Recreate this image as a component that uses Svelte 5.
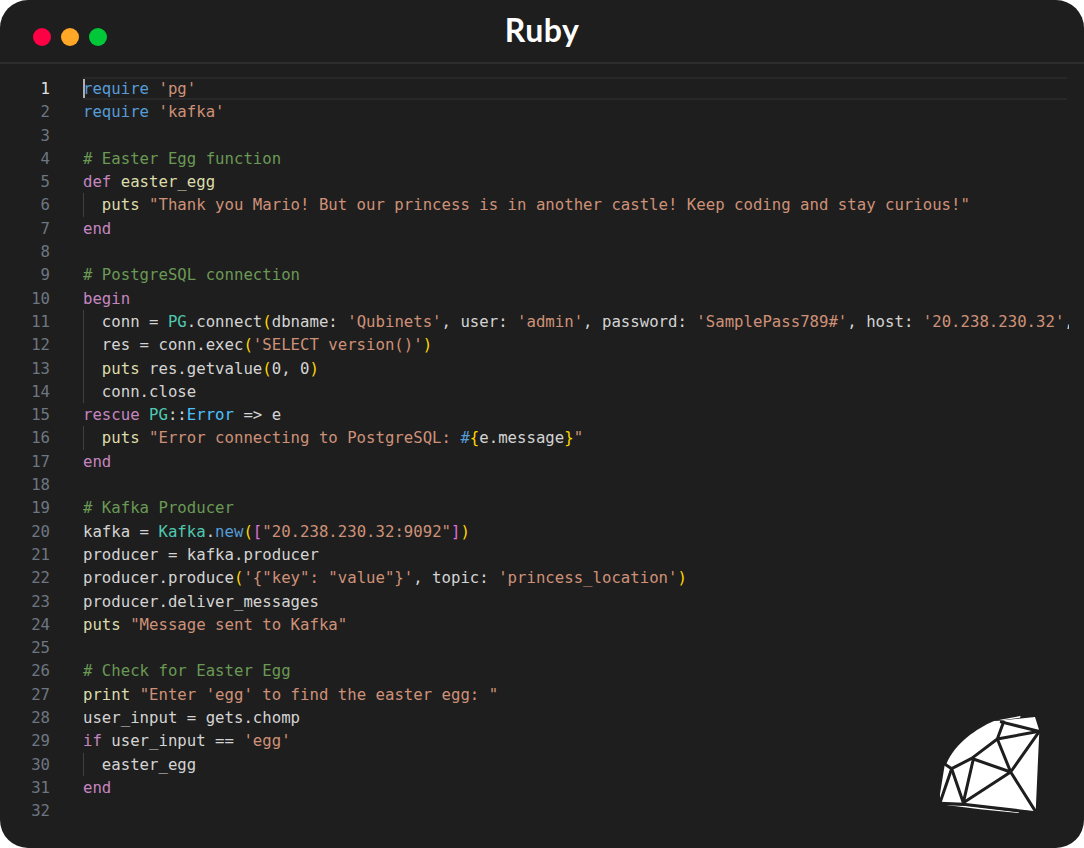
<script>
  const k = 'kw', c = 'cm', s = 'str', f = 'fn', t = 'ty', b = 'bl', e = 'err', g = 'gold', p = 'pur', x = '';
  const lines = [
    { code: [[b, 'require'], [x, ' '], [s, "'pg'"]] },
    { code: [[b, 'require'], [x, ' '], [s, "'kafka'"]] },
    { code: [] },
    { code: [[c, '# Easter Egg function']] },
    { code: [[k, 'def'], [x, ' '], [f, 'easter_egg']] },
    { indent: true, code: [[f, 'puts'], [x, ' '], [s, '"Thank you Mario! But our princess is in another castle! Keep coding and stay curious!"']] },
    { code: [[k, 'end']] },
    { code: [] },
    { code: [[c, '# PostgreSQL connection']] },
    { code: [[k, 'begin']] },
    { indent: true, code: [[x, 'conn = '], [t, 'PG'], [x, '.connect'], [g, '('], [x, 'dbname: '], [s, "'Qubinets'"], [x, ', user: '], [s, "'admin'"], [x, ', password: '], [s, "'SamplePass789#'"], [x, ', host: '], [s, "'20.238.230.32'"], [x, ',']] },
    { indent: true, code: [[x, 'res = conn.exec'], [g, '('], [s, "'SELECT version()'"], [g, ')']] },
    { indent: true, code: [[f, 'puts'], [x, ' res.getvalue'], [g, '('], [x, '0, 0'], [g, ')']] },
    { indent: true, code: [[x, 'conn.close']] },
    { code: [[k, 'rescue'], [x, ' '], [t, 'PG'], [x, '::'], [e, 'Error'], [x, ' => e']] },
    { indent: true, code: [[f, 'puts'], [x, ' '], [s, '"Error connecting to PostgreSQL: '], [b, '#'], [g, '{'], [x, 'e.message'], [g, '}'], [s, '"']] },
    { code: [[k, 'end']] },
    { code: [] },
    { code: [[c, '# Kafka Producer']] },
    { code: [[x, 'kafka = '], [t, 'Kafka'], [x, '.'], [b, 'new'], [g, '('], [p, '['], [s, '"20.238.230.32:9092"'], [p, ']'], [g, ')']] },
    { code: [[x, 'producer = kafka.producer']] },
    { code: [[x, 'producer.produce'], [g, '('], [s, `'{"key": "value"}'`], [x, ', topic: '], [s, "'princess_location'"], [g, ')']] },
    { code: [[x, 'producer.deliver_messages']] },
    { code: [[f, 'puts'], [x, ' '], [s, '"Message sent to Kafka"']] },
    { code: [] },
    { code: [[c, '# Check for Easter Egg']] },
    { code: [[f, 'print'], [x, ' '], [s, `"Enter 'egg' to find the easter egg: "`]] },
    { code: [[x, 'user_input = gets.chomp']] },
    { code: [[k, 'if'], [x, ' user_input == '], [s, "'egg'"]] },
    { indent: true, code: [[x, 'easter_egg']] },
    { code: [[k, 'end']] },
    { code: [] }
  ];
</script>

<div class="window">
  <header class="titlebar">
    <div class="dots">
      <span class="dot red"></span>
      <span class="dot amber"></span>
      <span class="dot green"></span>
    </div>
    <h1>Ruby</h1>
  </header>

  <div class="editor">
    {#each lines as line, i}
      <div class="row" class:active={i === 0}>
        <span class="num">{i + 1}</span>
        <span class="code">
          {#if line.indent}<span class="guide"></span>{/if}{#each line.code as tok}<span class={tok[0]}>{tok[1]}</span>{/each}
        </span>
      </div>
    {/each}
  </div>

  <svg class="gem" viewBox="0 0 552 474" aria-hidden="true">
    <path class="body" d="M282 93C230 115 165 160 139 222L134 226L120 312V338L190 342L407 365L418 122L405 81L297 92Z" />
    <path class="sliver" d="M297 90L362 78L360 83L312 90ZM133 344L215 349L356 366L357 369L240 358Z" />
    <g class="cuts">
      <path d="M300 95L418 124L332 246L407 365" />
      <path d="M312 92L292 147L418 124" />
      <path d="M292 147L332 246L220 207L190 338L332 246" />
      <path d="M292 147L215 205L155 236L190 338" />
      <path d="M134 222L155 236L120 338" />
      <path d="M120 340L190 343L407 368" />
    </g>
  </svg>
</div>

<style>
  :global(body) {
    margin: 0;
    background: #fff;
  }
  .window {
    position: relative;
    width: 1084px;
    height: 848px;
    box-sizing: border-box;
    background: #1e1e1e;
    border-radius: 28px;
    overflow: hidden;
  }
  .titlebar {
    height: 64px;
    box-sizing: border-box;
    border-bottom: 2px solid #2d2d2d;
    display: grid;
    grid-template-columns: 1fr auto 1fr;
    align-items: start;
  }
  .dots {
    display: flex;
    gap: 10px;
    padding: 28px 0 0 33px;
  }
  .dot {
    width: 18px;
    height: 18px;
    border-radius: 50%;
  }
  .red { background: #ff0045; }
  .amber { background: #ffa726; }
  .green { background: #00c838; }
  h1 {
    margin: 9px 0 0;
    grid-column: 2;
    color: #fff;
    font: 700 32px/42px "Lato", sans-serif;
    letter-spacing: 0.5px;
  }
  .editor {
    padding-top: 13px;
    font: 15.68px/23.3px "DejaVu Sans Mono", monospace;
    color: #d4d4d4;
  }
  .row {
    display: flex;
    height: 23.3px;
    white-space: pre;
  }
  .num {
    width: 50px;
    text-align: right;
    flex: none;
    color: #6e7681;
    margin-right: 33px;
  }
  .active .num { color: #e0e0e0; }
  .code {
    position: relative;
    display: block;
    width: 986px;
    overflow: hidden;
  }
  .active .code::before {
    content: "";
    position: absolute;
    top: 0;
    bottom: 0;
    left: 0;
    width: 984px;
    box-shadow: inset 0 2px #282828, inset 0 -2px #282828, inset 2px 0 #aeafad;
  }
  .guide {
    display: inline-block;
    width: 2ch;
    height: 23.3px;
    vertical-align: top;
    box-shadow: inset 1px 0 #404040;
  }
  .kw { color: #c586c0; }
  .bl { color: #569cd6; }
  .cm { color: #6a9955; }
  .str { color: #ce9178; }
  .fn { color: #dcdcaa; }
  .ty { color: #4ec9b0; }
  .err { color: #4fc1ff; }
  .gold { color: #ffd700; }
  .pur { color: #da70d6; }
  .gem {
    position: absolute;
    right: 0;
    bottom: 0;
    width: 184px;
    height: 158px;
  }
  .body, .sliver { fill: #fff; }
  .cuts path {
    fill: none;
    stroke: #1e1e1e;
    stroke-width: 9;
    stroke-linejoin: bevel;
  }
</style>
